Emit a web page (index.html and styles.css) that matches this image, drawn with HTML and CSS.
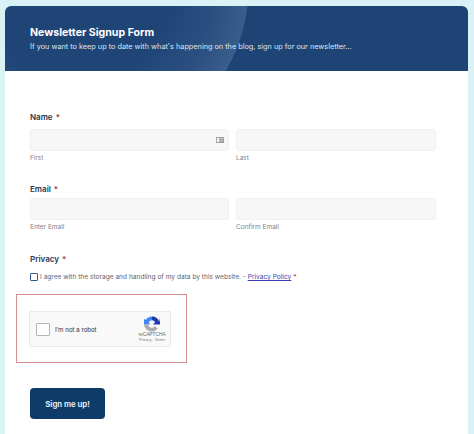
FILE: index.html
```html
<!DOCTYPE html>
<html lang="en">
<head>
    <meta charset="UTF-8">
    <meta name="viewport" content="width=device-width, initial-scale=1.0">
    <title>Newsletter Signup Form</title>
    <link rel="stylesheet" href="styles.css">
</head>
<body>
    <div class="card">
        <div class="header">
            <h1>Newsletter Signup Form</h1>
            <p>If you want to keep up to date with what's happening on the blog, sign up for our newsletter...</p>
        </div>
        <form class="form">
            <div class="field name-field">
                <div class="label">Name <span class="req">*</span></div>
                <div class="row">
                    <div class="col">
                        <div class="input">
                            <svg class="contact-icon" width="8" height="6" viewBox="0 0 8 6">
                                <rect width="8" height="6" rx="0.6" fill="#9a9a9a"/>
                                <rect x="0.8" y="1" width="2.6" height="4" fill="#f4f4f4"/>
                                <rect x="4.4" y="1.2" width="2.8" height="0.8" fill="#e4e4e4"/>
                                <rect x="4.4" y="3.4" width="2.8" height="0.8" fill="#e4e4e4"/>
                            </svg>
                        </div>
                        <div class="sub">First</div>
                    </div>
                    <div class="col">
                        <div class="input"></div>
                        <div class="sub">Last</div>
                    </div>
                </div>
            </div>
            <div class="field email-field">
                <div class="label">Email <span class="req">*</span></div>
                <div class="row">
                    <div class="col">
                        <div class="input"></div>
                        <div class="sub">Enter Email</div>
                    </div>
                    <div class="col">
                        <div class="input"></div>
                        <div class="sub">Confirm Email</div>
                    </div>
                </div>
            </div>
            <div class="field privacy-field">
                <div class="label">Privacy <span class="req">*</span></div>
                <div class="consent">
                    <span class="checkbox"></span>
                    <span>I agree with the storage and handling of my data by this website. - <a href="#">Privacy Policy</a> <span class="req-inline">*</span></span>
                </div>
            </div>
            <div class="highlight">
                <div class="captcha">
                    <span class="captcha-box"></span>
                    <span class="captcha-text">I'm not a robot</span>
                    <div class="captcha-logo">
                        <svg width="16" height="16" viewBox="0 0 16 16">
                            <path d="M8 0.5A7.5 7.5 0 0 1 15.2 6L16 1.5V8.5H9L11.2 6.2A3.8 3.8 0 0 0 8 4.2Z" fill="#1c3aa9"/>
                            <path d="M8 0.5A7.5 7.5 0 0 0 1.6 4L0 2.6V8.5H6L4.8 6.2A3.8 3.8 0 0 1 8 4.2Z" fill="#4285f4"/>
                            <path d="M0 8.5A8 7.5 0 0 0 8 15.5A7.5 7.5 0 0 0 13.8 12.6L10.8 10.2A3.8 3.8 0 0 1 8 11.8A3.8 3.8 0 0 1 4.2 8.5Z" fill="#ababab"/>
                        </svg>
                        <div class="captcha-name">reCAPTCHA</div>
                        <div class="captcha-links">Privacy - Terms</div>
                    </div>
                </div>
            </div>
            <button class="submit" type="button">Sign me up!</button>
        </form>
    </div>
</body>
</html>
```

FILE: styles.css
```css
* {
    box-sizing: border-box;
}
html, body {
    height: 100%;
}
body {
    margin: 0;
    padding: 6px 6px 0 5px;
    background-color: #d8f2f6;
    font-family: "Inter", "Liberation Sans", sans-serif;
    color: #2a3550;
    overflow: hidden;
}
.card {
    height: 100%;
    background-color: #fff;
    border-radius: 6px 6px 0 0;
}
.header {
    height: 65px;
    padding: 20px 0 0 25px;
    border-radius: 6px 6px 0 0;
    color: #fff;
    background-color: #1e4476;
    background-image: radial-gradient(circle 170px at 74px -20px, #1f4577 55%, #2a4f80 80%, #3a5e8b 99.5%, #1e4476 100%);
}
.header h1 {
    margin: 0;
    font-size: 10.6px;
    line-height: 13px;
    font-weight: 700;
}
.header p {
    margin: 2px 0 0;
    font-size: 7.3px;
    line-height: 11px;
    color: #dde6f0;
    white-space: nowrap;
}
.form {
    padding: 0 32px 0 25px;
}
.label {
    font-size: 8px;
    line-height: 12px;
    font-weight: 600;
}
.req {
    color: #a8322a;
    margin-left: 1px;
}
.req-inline {
    color: #a8322a;
}
.field {
    display: flex;
    flex-direction: column;
}
.name-field {
    padding-top: 40px;
}
.email-field {
    padding-top: 20px;
}
.email-field .row {
    margin-top: 3px;
}
.privacy-field {
    padding-top: 21px;
}
.row {
    display: grid;
    grid-template-columns: 199px 200px;
    gap: 7px;
    margin-top: 6px;
}
.input {
    display: flex;
    align-items: center;
    justify-content: flex-end;
    height: 22px;
    padding-right: 4px;
    background-color: #f7f7f8;
    border: 1px solid #eff0f1;
    border-radius: 3px;
}
.sub {
    margin-top: 3px;
    font-size: 6.5px;
    line-height: 9px;
    color: #7d828c;
}
.consent {
    display: flex;
    align-items: center;
    gap: 2px;
    margin-top: 7px;
    font-size: 6.6px;
    line-height: 10px;
    color: #5f6470;
}
.consent a {
    color: #3a3fb0;
}
.checkbox {
    width: 8px;
    height: 8px;
    border: 1px solid #2f5a8c;
    border-radius: 1px;
}
.highlight {
    width: 171px;
    height: 69px;
    margin: 12px 0 0 -14px;
    padding: 16px 0 0 12px;
    border: 1px solid #d98f8f;
}
.captcha {
    display: flex;
    align-items: center;
    width: 142px;
    height: 36px;
    padding: 0 3px 0 6px;
    background-color: #f9f9f9;
    border: 1px solid #e9e9e9;
    border-radius: 2px;
    font-family: "Liberation Sans", sans-serif;
}
.captcha-box {
    width: 14px;
    height: 13px;
    background-color: #fff;
    border: 1px solid #b5b5b5;
    border-radius: 1px;
}
.captcha-text {
    margin-left: 5px;
    font-size: 6.5px;
    color: #333;
}
.captcha-logo {
    display: flex;
    flex-direction: column;
    align-items: center;
    margin-left: auto;
    width: 30px;
}
.captcha-name {
    font-size: 4.8px;
    line-height: 6px;
    color: #666;
}
.captcha-links {
    font-size: 3.8px;
    line-height: 5px;
    color: #777;
}
.submit {
    display: block;
    width: 75px;
    height: 31px;
    margin-top: 25px;
    padding: 0;
    background-color: #0f3b69;
    color: #f2f6fa;
    border: none;
    border-radius: 4px;
    font-family: "Inter", sans-serif;
    font-size: 7.8px;
    font-weight: 600;
}
```
